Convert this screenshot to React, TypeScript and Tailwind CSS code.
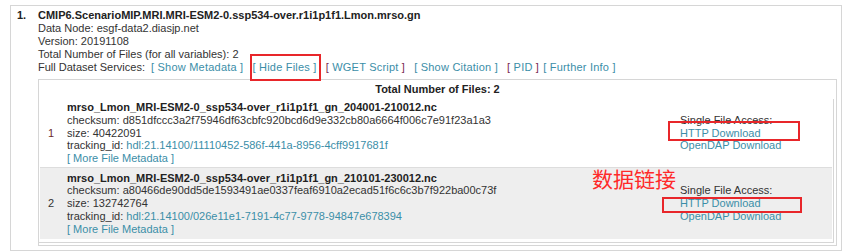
import React from "react";

const LINK = "text-[#3b8ea8]";

type FileRow = {
  idx: string;
  name: string;
  checksum: string;
  size: string;
  tracking: string;
  shaded?: boolean;
};

const files: FileRow[] = [
  {
    idx: "1",
    name: "mrso_Lmon_MRI-ESM2-0_ssp534-over_r1i1p1f1_gn_204001-210012.nc",
    checksum: "d851dfccc3a2f75946df63cbfc920bcd6d9e332cb80a6664f006c7e91f23a1a3",
    size: "40422091",
    tracking: "hdl:21.14100/11110452-586f-441a-8956-4cff9917681f",
  },
  {
    idx: "2",
    name: "mrso_Lmon_MRI-ESM2-0_ssp534-over_r1i1p1f1_gn_210101-230012.nc",
    checksum: "a80466de90dd5de1593491ae0337feaf6910a2ecad51f6c6c3b7f922ba00c73f",
    size: "132742764",
    tracking: "hdl:21.14100/026e11e1-7191-4c77-9778-94847e678394",
    shaded: true,
  },
];

// one "[ label ]" service link
function Service({
  label,
  bracket = LINK,
  className = "",
  marked = false,
}: {
  label: string;
  bracket?: string;
  className?: string;
  marked?: boolean;
}) {
  return (
    <span className={`relative tracking-[0.22px] ${className}`}>
      <span className={bracket}>[ </span>
      <span className={LINK}>{label}</span>
      <span className={bracket}> ]</span>
      {marked && (
        <span className="absolute -left-[2px] -right-[4px] -top-[7px] -bottom-[8px] border-2 border-[#e8262a]" />
      )}
    </span>
  );
}

function Row({ f }: { f: FileRow }) {
  return (
    <div
      className={`flex items-center leading-[12.7px] ${
        f.shaded ? "h-[72px] bg-[#eeeeee] border-t border-[#dddddd]" : "h-[68px]"
      }`}
    >
      <div className={`w-[22px] text-center ${f.idx === "1" ? "text-[#6b2b2b]" : "text-[#333]"}`}>{f.idx}</div>
      <div className="flex-1 pl-[5px]">
        <div className="font-bold text-[#222]">{f.name}</div>
        <div>checksum: {f.checksum}</div>
        <div>size: {f.size}</div>
        <div>
          tracking_id: <span className={LINK}>{f.tracking}</span>
        </div>
        <div className={LINK}>[ More File Metadata ]</div>
      </div>
      <div className="w-[152px]">
        <div>Single File Access:</div>
        <div className={LINK}>HTTP Download</div>
        <div className={LINK}>OpenDAP Download</div>
      </div>
    </div>
  );
}

export default function App() {
  return (
    <div
      className="relative w-[865px] h-[252px] bg-white pt-[5px] pl-[10px] text-[11px] text-[#333] overflow-hidden"
      style={{ fontFamily: '"Liberation Sans", Arial, sans-serif' }}
    >
      {/* dataset result box */}
      <div className="w-[832px] h-[246px] border border-[#d6d6d6] flex pt-[3px]">
        <div className="w-[27px] pl-[6px] font-bold text-[#222] leading-[13px]">1.</div>
        <div className="flex-1 pr-[3px]">
          <div className="leading-[13px]">
            <div className="font-bold text-[#222]">CMIP6.ScenarioMIP.MRI.MRI-ESM2-0.ssp534-over.r1i1p1f1.Lmon.mrso.gn</div>
            <div>Data Node: esgf-data2.diasjp.net</div>
            <div>Version: 20191108</div>
            <div>Total Number of Files (for all variables): 2</div>
            <div className="whitespace-nowrap">
              Full Dataset Services:
              <Service label="Show Metadata" className="ml-[6px]" />
              <Service label="Hide Files" className="ml-[9px]" marked />
              <Service label="WGET Script" bracket="text-[#7a2a50]" className="ml-[9px]" />
              <Service label="Show Citation" className="ml-[9px]" />
              <Service label="PID" bracket="text-[#7a2a50]" className="ml-[9px]" />
              <Service label="Further Info" className="ml-[4px]" />
            </div>
          </div>

          {/* files table */}
          <div className="mt-[5px] w-[799px] h-[167px] border border-[#d6d6d6] flex flex-col">
            <div className="h-[19px] flex items-center justify-center font-bold text-[#222]">
              Total Number of Files: 2
            </div>
            <div className="mr-[2px] mb-[2px] pl-[1px] pr-[1px] pb-[2px] border-r border-b border-[#d6d6d6] flex-1">
              {files.map((f) => (
                <Row key={f.idx} f={f} />
              ))}
            </div>
          </div>
        </div>
      </div>

      {/* red annotations */}
      <div className="absolute left-[668px] top-[121px] w-[132px] h-[20px] border-2 border-[#e8262a]" />
      <div className="absolute left-[662px] top-[197px] w-[140px] h-[16px] border-2 border-[#e8262a]" />
      <div
        className="absolute left-[592px] top-[166px] text-[21px] leading-[24px] text-[#ff2a2a]"
        style={{ fontFamily: '"Noto Sans CJK SC", sans-serif' }}
      >
        数据链接
      </div>
    </div>
  );
}
